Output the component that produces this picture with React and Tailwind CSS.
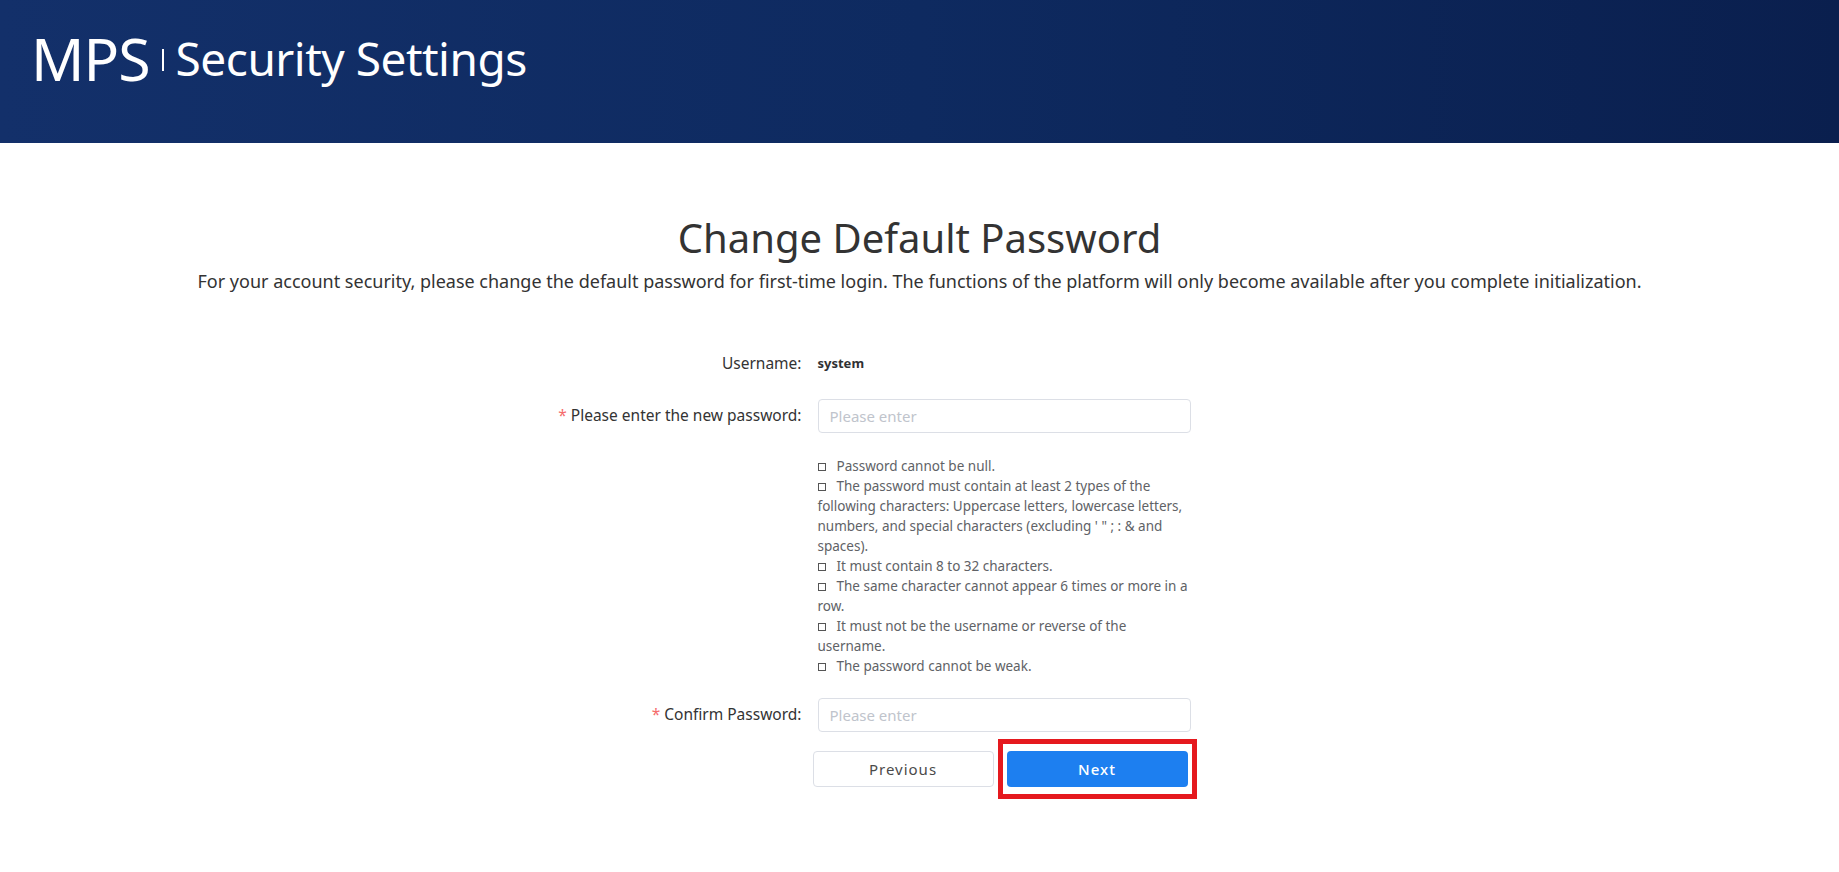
import React from "react";

const rules = [
  "Password cannot be null.",
  "The password must contain at least 2 types of the following characters: Uppercase letters, lowercase letters, numbers, and special characters (excluding ' \" ; : & and spaces).",
  "It must contain 8 to 32 characters.",
  "The same character cannot appear 6 times or more in a row.",
  "It must not be the username or reverse of the username.",
  "The password cannot be weak.",
];

function Label({ required, children }) {
  return (
    <div className="flex h-full items-center justify-end text-[15.5px] text-[#333]">
      {required && <span className="mr-[4px] text-[#f56c6c]">*</span>}
      <span>{children}</span>
    </div>
  );
}

function TextInput() {
  return (
    <input
      type="password"
      placeholder="Please enter"
      className="h-[34px] w-full rounded-[4px] border border-[#dcdfe6] bg-white px-[11px] text-[15px] text-[#606266] outline-none placeholder:text-[#c0c4cc]"
    />
  );
}

export default function App() {
  return (
    <div
      className="min-h-[872px] w-full bg-white"
      style={{ fontFamily: '"Noto Sans", "Open Sans", sans-serif' }}
    >
      <header className="flex h-[143px] items-start bg-gradient-to-r from-[#13306a] via-[#0e2a60] to-[#0a1f4e] pl-[31px] pt-[24px] text-white">
        <div className="flex items-center">
          <span className="text-[59px] leading-[68px] tracking-[-1px]">MPS</span>
          <span className="ml-[12px] mr-[12px] mt-[4px] h-[22px] w-[2px] bg-white" />
          <span className="text-[46px] leading-[68px] tracking-[-0.5px]">Security Settings</span>
        </div>
      </header>

      <main className="flex flex-col items-center">
        <h1 className="mt-[71px] text-[40px] leading-[48px] text-[#333]">Change Default Password</h1>
        <p className="mt-[7px] text-[18px] leading-[24px] text-[#333]">
          For your account security, please change the default password for first-time login. The functions of the platform will only become available after you complete initialization.
        </p>

        <div className="mt-[54px] w-[760px]">
          <div className="grid grid-cols-[262px_373px] gap-x-[16px]">
            <div className="h-[34px]">
              <Label>Username:</Label>
            </div>
            <div className="flex h-[34px] items-center text-[13px] font-bold text-[#303133]">system</div>

            <div className="mt-[18px] h-[34px]">
              <Label required>Please enter the new password:</Label>
            </div>
            <div className="mt-[18px]">
              <TextInput />
            </div>

            <div />
            <ul className="mt-[23px] text-[13.5px] leading-[20px] text-[#606266]">
              {rules.map((r) => (
                <li key={r}>
                  <span className="mr-[11px] inline-block h-[8px] w-[8px] border border-[#555] align-[0px]" />
                  {r}
                </li>
              ))}
            </ul>

            <div className="mt-[22px] h-[34px]">
              <Label required>Confirm Password:</Label>
            </div>
            <div className="mt-[22px]">
              <TextInput />
            </div>

            <div />
            <div className="mt-[7px] -ml-[5px] flex items-center gap-[4px]">
              <button className="h-[36px] w-[181px] shrink-0 rounded-[4px] border border-[#dcdfe6] bg-white text-[15px] tracking-[1px] text-[#4a4a4a]">
                Previous
              </button>
              <div className="shrink-0 border-[5px] border-[#e5191e] px-[4px] py-[7px]">
                <button className="block h-[36px] w-[181px] rounded-[4px] bg-[#1d7ff0] text-[15px] font-medium tracking-[1px] text-white">
                  Next
                </button>
              </div>
            </div>
          </div>
        </div>
      </main>
    </div>
  );
}
